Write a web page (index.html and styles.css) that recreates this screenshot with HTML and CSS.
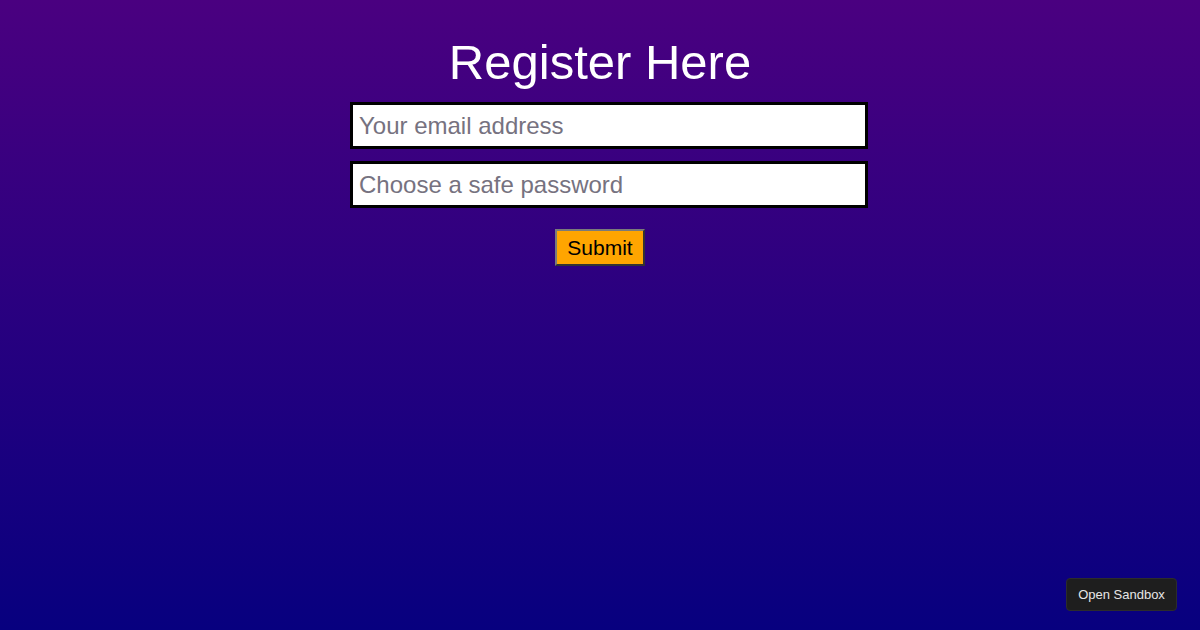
FILE: index.html
```html
<!DOCTYPE html>
<html lang="en">
<head>
<meta charset="utf-8">
<title>Register Here</title>
<link rel="stylesheet" href="styles.css">
</head>
<body>
<main class="page">
  <h1 class="title">Register Here</h1>
  <form class="form">
    <input class="field" type="email" placeholder="Your email address">
    <input class="field" type="password" placeholder="Choose a safe password">
    <button class="submit" type="button">Submit</button>
  </form>
</main>
<a class="sandbox" href="#">Open Sandbox</a>
</body>
</html>
```

FILE: styles.css
```css
html, body {
  margin: 0;
  height: 100%;
}
body {
  background: linear-gradient(to bottom, #4a0080 0%, #07007f 100%);
  font-family: "Liberation Sans", Arial, sans-serif;
  overflow: hidden;
}
.page {
  display: flex;
  flex-direction: column;
  align-items: center;
  padding-top: 35px;
}
.title {
  margin: 0;
  font-weight: normal;
  font-size: 49px;
  line-height: 55px;
  color: #ffffff;
}
.form {
  width: 500px;
  display: flex;
  flex-direction: column;
  align-items: flex-start;
  margin-top: 12px;
}
.field {
  box-sizing: border-box;
  width: 518px;
  height: 47px;
  margin: 0 0 12px 0;
  padding: 0 6px;
  border: 3px solid #000;
  background: #fff;
  font-family: "Liberation Sans", Arial, sans-serif;
  font-size: 24px;
  color: #000;
  outline: none;
}
.field::placeholder {
  color: #767280;
}
.submit {
  align-self: center;
  box-sizing: border-box;
  width: 90px;
  height: 37px;
  margin-top: 9px;
  padding: 0;
  background: #ffa500;
  border: 2px solid;
  border-color: #7a7a7a #333 #333 #7a7a7a;
  font-family: "Liberation Sans", Arial, sans-serif;
  font-size: 21px;
  color: #000;
}
.sandbox {
  position: fixed;
  right: 23px;
  bottom: 19px;
  box-sizing: border-box;
  width: 111px;
  height: 33px;
  display: flex;
  align-items: center;
  justify-content: center;
  background: #1e1e1e;
  border: 1px solid #2c2c2c;
  border-radius: 4px;
  color: #e6e6e6;
  font-family: "Liberation Sans", Arial, sans-serif;
  font-size: 13px;
  text-decoration: none;
}
```
